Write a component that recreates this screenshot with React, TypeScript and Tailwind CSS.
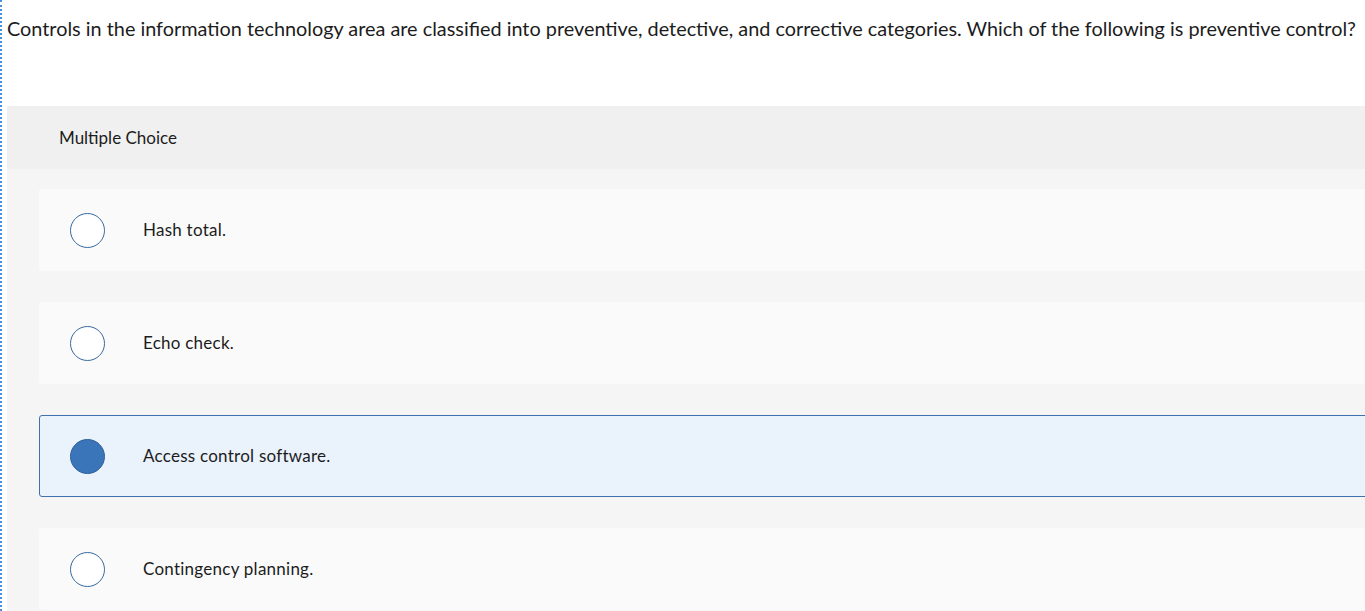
import React from 'react'

const options = [
    { id: 1, label: 'Hash total.' },
    { id: 2, label: 'Echo check.' },
    { id: 3, label: 'Access control software.' },
    { id: 4, label: 'Contingency planning.' },
]

const App = () => {
    const selected = 3

    return (
        <div
            className="h-[611px] w-[1365px] overflow-hidden bg-white text-[#1c1c1c] border-l-2 border-dotted border-[#4a8fd8]"
            style={{ fontFamily: 'Lato, "Open Sans", Arial, sans-serif' }}
        >
            <div className="w-[1420px] pl-[5px]">
                {/* Question */}
                <div className="h-[106px] pt-[16px]">
                    <p className="whitespace-nowrap text-[19.85px] leading-[24px]">
                        Controls in the information technology area are classified into preventive, detective, and corrective categories. Which of the following is preventive control?
                    </p>
                </div>

                {/* Header */}
                <div className="flex h-[63px] items-center bg-[#f0f0f0] pl-[52px] text-[17px]">
                    Multiple Choice
                </div>

                {/* Choices */}
                <div className="flex flex-col gap-[31px] bg-[#f5f5f5] pl-[32px] pt-[20px] pb-[20px]">
                    {options.map((opt) => {
                        const isSel = opt.id === selected
                        return (
                            <div
                                key={opt.id}
                                className={`flex h-[82px] items-center rounded-[3px] border ${isSel ? 'border-[#3d72ad] bg-[#eaf2fc]' : 'border-transparent bg-[#fafafa]'}`}
                            >
                                <div className="pl-[30px]">
                                    <div
                                        className={`h-[35px] w-[35px] rounded-full border-[1.5px] ${isSel ? 'border-[#2e609a] bg-[#3b75b9]' : 'border-[#386a9e] bg-white'}`}
                                    />
                                </div>
                                <span className="pl-[38px] text-[17px] tracking-[0.25px]">{opt.label}</span>
                            </div>
                        )
                    })}
                </div>
            </div>
        </div>
    )
}

export default App
